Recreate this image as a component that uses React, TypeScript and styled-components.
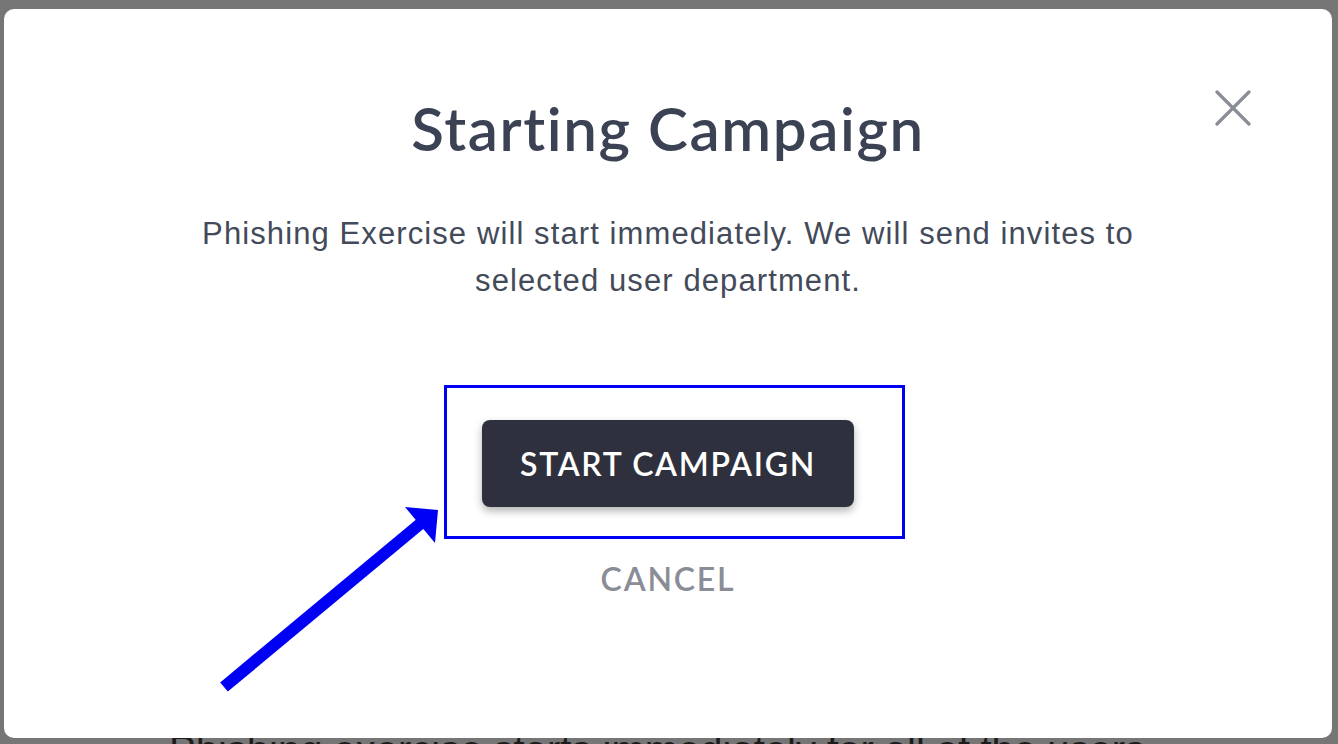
import React from "react";
import styled, { createGlobalStyle } from "styled-components";

const GlobalStyle = createGlobalStyle`
  html, body {
    margin: 0;
    padding: 0;
    background: #767676;
    overflow: hidden;
  }
  * { box-sizing: border-box; }
`;

const Page = styled.div`
  position: relative;
  width: 1338px;
  height: 744px;
  overflow: hidden;
  padding: 9px 6px 0 4px;
  background: #767676;
`;

const Modal = styled.div`
  position: relative;
  z-index: 1;
  width: 1328px;
  height: 729px;
  background: #ffffff;
  border-radius: 10px;
  display: flex;
  flex-direction: column;
  align-items: center;
  padding-top: 83px;
`;

const BackdropLine = styled.div`
  margin-top: -8px;
  padding-left: 165px;
  font-family: "Liberation Sans", Arial, sans-serif;
  font-size: 40px;
  line-height: 40px;
  color: #1c1c1c;
  white-space: nowrap;
`;

const Title = styled.h1`
  margin: 0;
  font-family: Lato, "Noto Sans", sans-serif;
  font-weight: 600;
  font-size: 60px;
  line-height: 72px;
  color: #3b4254;
  letter-spacing: 1.6px;
`;

const Message = styled.p`
  margin: 46px 0 0;
  max-width: 960px;
  text-align: center;
  font-family: "Liberation Sans", Arial, sans-serif;
  font-size: 31px;
  line-height: 47px;
  letter-spacing: 1.1px;
  color: #434a59;
`;

const PrimaryButton = styled.button`
  margin-top: 116px;
  width: 372px;
  height: 87px;
  border: none;
  border-radius: 8px;
  background: #2e313d;
  color: #ffffff;
  font-family: Lato, "Noto Sans", sans-serif;
  font-weight: 600;
  font-size: 32px;
  letter-spacing: 1.7px;
  box-shadow: 0 4px 8px rgba(0, 0, 0, 0.3);
  cursor: pointer;
`;

const CancelButton = styled.button`
  margin-top: 53px;
  border: none;
  background: transparent;
  padding: 0;
  font-family: Lato, "Noto Sans", sans-serif;
  font-weight: 600;
  font-size: 32px;
  line-height: 38px;
  letter-spacing: 1.8px;
  color: #8a8d96;
  cursor: pointer;
`;

const CloseButton = styled.button`
  position: absolute;
  top: 81px;
  right: 81px;
  width: 36px;
  height: 36px;
  padding: 0;
  border: none;
  background: transparent;
  cursor: pointer;
`;

const Highlight = styled.div`
  position: absolute;
  left: 440px;
  top: 376px;
  width: 461px;
  height: 154px;
  border: 3px solid #0000f5;
`;

const Arrow = styled.svg`
  position: absolute;
  z-index: 2;
  left: 0;
  top: 0;
  pointer-events: none;
`;

export default function App() {
  return (
    <>
      <GlobalStyle />
      <Page>
        <Modal>
          <CloseButton aria-label="Close">
            <svg width="36" height="36" viewBox="0 0 36 36">
              <path
                d="M2 2 L34 34 M34 2 L2 34"
                stroke="#8a8d96"
                strokeWidth="3.2"
                strokeLinecap="round"
              />
            </svg>
          </CloseButton>
          <Title>Starting Campaign</Title>
          <Message>
            Phishing Exercise will start immediately. We will send invites to
            selected user department.
          </Message>
          <PrimaryButton>START CAMPAIGN</PrimaryButton>
          <CancelButton>CANCEL</CancelButton>
          <Highlight />
        </Modal>
        <BackdropLine>Phishing exercise starts immediately for all of the users</BackdropLine>
        <Arrow width="1338" height="744" viewBox="0 0 1338 744">
          <path d="M224 687 L420 524" stroke="#0000f5" strokeWidth="12" />
          <polygon points="405,507 438,510 435,543" fill="#0000f5" />
        </Arrow>
      </Page>
    </>
  );
}
